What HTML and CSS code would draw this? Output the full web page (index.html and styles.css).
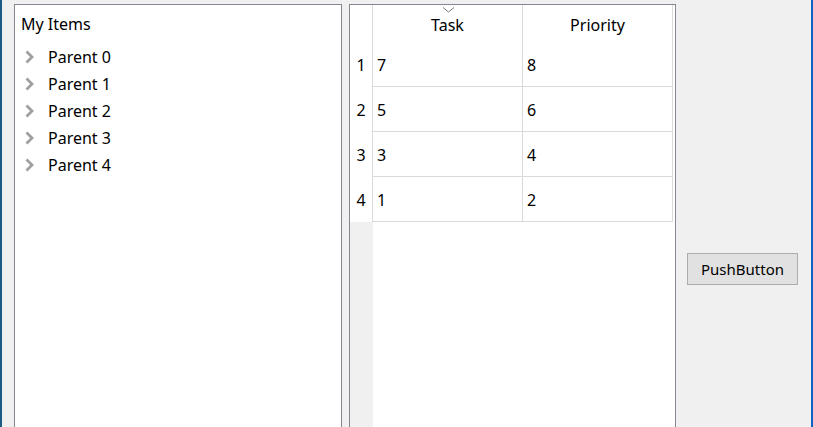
FILE: index.html
```html
<!DOCTYPE html>
<html>
<head>
<meta charset="utf-8">
<link rel="stylesheet" href="styles.css">
</head>
<body>
<div class="window">
  <div class="tree">
    <div class="tree-header">My Items</div>
    <div class="tree-item"><svg class="chev" width="12" height="14" viewBox="0 0 12 14"><polyline points="2.5,1.5 8,7 2.5,12.5" /></svg><span>Parent 0</span></div>
    <div class="tree-item"><svg class="chev" width="12" height="14" viewBox="0 0 12 14"><polyline points="2.5,1.5 8,7 2.5,12.5" /></svg><span>Parent 1</span></div>
    <div class="tree-item"><svg class="chev" width="12" height="14" viewBox="0 0 12 14"><polyline points="2.5,1.5 8,7 2.5,12.5" /></svg><span>Parent 2</span></div>
    <div class="tree-item"><svg class="chev" width="12" height="14" viewBox="0 0 12 14"><polyline points="2.5,1.5 8,7 2.5,12.5" /></svg><span>Parent 3</span></div>
    <div class="tree-item"><svg class="chev" width="12" height="14" viewBox="0 0 12 14"><polyline points="2.5,1.5 8,7 2.5,12.5" /></svg><span>Parent 4</span></div>
  </div>
  <div class="table">
    <div class="hrow">
      <div class="corner"></div>
      <div class="hcell sorted">Task<svg class="sort" width="13" height="6" viewBox="0 0 13 6"><polyline points="1,0.5 6.5,5 12,0.5" /></svg></div>
      <div class="hcell">Priority</div>
    </div>
    <div class="row"><div class="num">1</div><div class="cell">7</div><div class="cell">8</div></div>
    <div class="row"><div class="num">2</div><div class="cell">5</div><div class="cell">6</div></div>
    <div class="row"><div class="num">3</div><div class="cell">3</div><div class="cell">4</div></div>
    <div class="row"><div class="num">4</div><div class="cell">1</div><div class="cell">2</div></div>
    <div class="filler"><div class="filler-side"></div><div class="filler-main"></div></div>
  </div>
  <div class="side">
    <button class="btn">PushButton</button>
  </div>
</div>
</body>
</html>
```
FILE: styles.css
```css
html, body {
  margin: 0;
  padding: 0;
  background: #f0f0f0;
  overflow: hidden;
}
body {
  font-family: "Noto Sans", "Open Sans", sans-serif;
  font-size: 16px;
  color: #000;
}
.window {
  width: 813px;
  height: 427px;
  box-sizing: border-box;
  border-left: 2px solid #1d5a86;
  border-right: 2px solid #0f62c4;
  display: flex;
  align-items: flex-start;
  overflow: hidden;
}
.tree {
  margin-left: 12px;
  margin-top: 4px;
  width: 328px;
  height: 440px;
  box-sizing: border-box;
  border: 1px solid #828790;
  background: #fff;
  flex: none;
}
.tree-header {
  height: 39px;
  line-height: 39px;
  padding-left: 6px;
}
.tree-item {
  height: 27px;
  display: flex;
  align-items: center;
  margin-top: -1px;
  margin-bottom: 1px;
}
.chev {
  margin-left: 9px;
  margin-right: 12px;
  flex: none;
}
.chev polyline {
  fill: none;
  stroke: #a0a0a0;
  stroke-width: 2.8;
}
.table {
  margin-left: 7px;
  margin-top: 4px;
  width: 327px;
  height: 440px;
  box-sizing: border-box;
  border: 1px solid #828790;
  background: #fff;
  flex: none;
  display: flex;
  flex-direction: column;
}
.hrow, .row {
  display: flex;
  flex: none;
}
.hrow {
  height: 37px;
}
.corner, .num {
  width: 22px;
  border-right: 1px solid #dadada;
  background: #fff;
  flex: none;
}
.hcell {
  width: 149px;
  border-right: 1px solid #dadada;
  text-align: center;
  line-height: 40px;
  position: relative;
  flex: none;
}
.sort {
  position: absolute;
  left: 69px;
  top: 2px;
}
.sort polyline {
  fill: none;
  stroke: #7a7a7a;
  stroke-width: 1;
}
.row {
  height: 45px;
}
.num {
  text-align: center;
  line-height: 47px;
}
.cell {
  width: 145px;
  padding-left: 4px;
  border-right: 1px solid #dadada;
  border-bottom: 1px solid #dadada;
  line-height: 47px;
  height: 44px;
  flex: none;
}
.filler {
  flex: 1;
  display: flex;
}
.filler-side {
  width: 23px;
  background: #f0f0f0;
}
.filler-main {
  flex: 1;
  background: #fff;
}
.side {
  margin-left: 11px;
  padding-top: 253px;
}
.btn {
  width: 111px;
  height: 32px;
  box-sizing: border-box;
  border: 1px solid #adadad;
  background: #e1e1e1;
  font-family: "Noto Sans", "Open Sans", sans-serif;
  font-size: 15px;
  color: #000;
  padding: 0;
  margin: 0;
  line-height: 28px;
}
```
